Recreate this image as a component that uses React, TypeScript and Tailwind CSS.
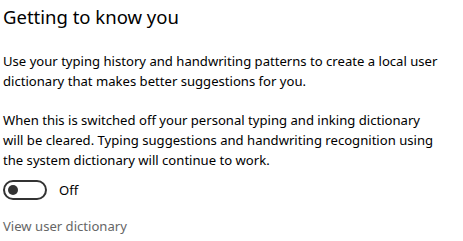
import React, { useState } from "react";

const font = { fontFamily: '"Segoe UI", "Noto Sans", "Open Sans", sans-serif' };

export default function App() {
  const [on, setOn] = useState(false);

  return (
    <div className="w-[463px] h-[241px] bg-white text-black overflow-hidden pl-[3px]" style={font}>
      <h1 className="text-[18.5px] leading-[26px] pt-[4px] font-normal">Getting to know you</h1>

      <p className="mt-[21px] text-[13.1px] leading-[20px]">
        <span className="block whitespace-nowrap">Use your typing history and handwriting patterns to create a local user</span>
        <span className="block whitespace-nowrap">dictionary that makes better suggestions for you.</span>
      </p>

      <p className="mt-[19px] text-[13.1px] leading-[20px]">
        <span className="block whitespace-nowrap">When this is switched off your personal typing and inking dictionary</span>
        <span className="block whitespace-nowrap">will be cleared. Typing suggestions and handwriting recognition using</span>
        <span className="block whitespace-nowrap">the system dictionary will continue to work.</span>
      </p>

      <div className="mt-[10px] flex items-center gap-[12px]">
        <button
          onClick={() => setOn(!on)}
          className="w-[44px] h-[20px] rounded-full border-2 border-[#333] flex items-center px-[3px]"
        >
          <span className="w-[10px] h-[10px] rounded-full bg-[#333]" />
        </button>
        <span className="text-[13.1px] leading-[20px]">{on ? "On" : "Off"}</span>
      </div>

      <div className="mt-[16px] text-[13.1px] leading-[20px] text-[#666]">View user dictionary</div>
    </div>
  );
}
